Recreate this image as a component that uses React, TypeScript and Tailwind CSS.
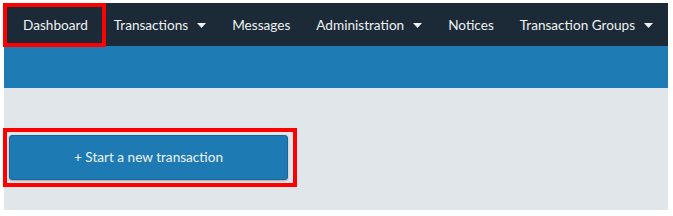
import React from 'react'

const navItems = [
  { label: 'Dashboard', caret: false },
  { label: 'Transactions', caret: true },
  { label: 'Messages', caret: false },
  { label: 'Administration', caret: true },
  { label: 'Notices', caret: false },
  { label: 'Transaction Groups', caret: true },
]

function Caret() {
  return (
    <svg width="9" height="5" viewBox="0 0 9 5" className="ml-[9px] shrink-0">
      <path d="M0 0h9L4.5 5z" fill="currentColor" />
    </svg>
  )
}

export default function App() {
  return (
    <div className="bg-white w-[673px] h-[216px] pt-[3px] pl-[4px] font-['Lato','Noto_Sans',sans-serif]">
      <div className="w-[664px]">
        {/* Top nav */}
        <nav className="relative flex items-stretch bg-[#1b2a36] h-[43px] pl-[6px] text-[13.6px] text-[#eef1f3] whitespace-nowrap">
          {navItems.map((item) => (
            <div key={item.label} className="flex items-center px-[13px] pt-[1px]">
              <span>{item.label}</span>
              {item.caret && <Caret />}
            </div>
          ))}
          {/* highlight box */}
          <div className="absolute left-[-1px] top-0 w-[103px] h-[44px] border-4 border-[#ff0000]" />
        </nav>

        {/* Blue band */}
        <div className="bg-[#1e7bb3] h-[42px]" />

        {/* Content */}
        <div className="bg-[#e1e6ea] h-[122px] pt-[47px] pl-[5px]">
          <div className="relative w-[279px]">
            <button className="w-[279px] h-[45px] rounded-[3px] bg-[#1e7ab2] border border-[#19669a] shadow-[0_1px_2px_rgba(0,0,0,0.25)] text-[13.6px] text-[#eef2f5] pb-[1px]">
              + Start a new transaction
            </button>
            <div className="absolute left-[-6px] top-[-7px] w-[294px] h-[59px] border-4 border-[#ff0000]" />
          </div>
        </div>
      </div>
    </div>
  )
}
